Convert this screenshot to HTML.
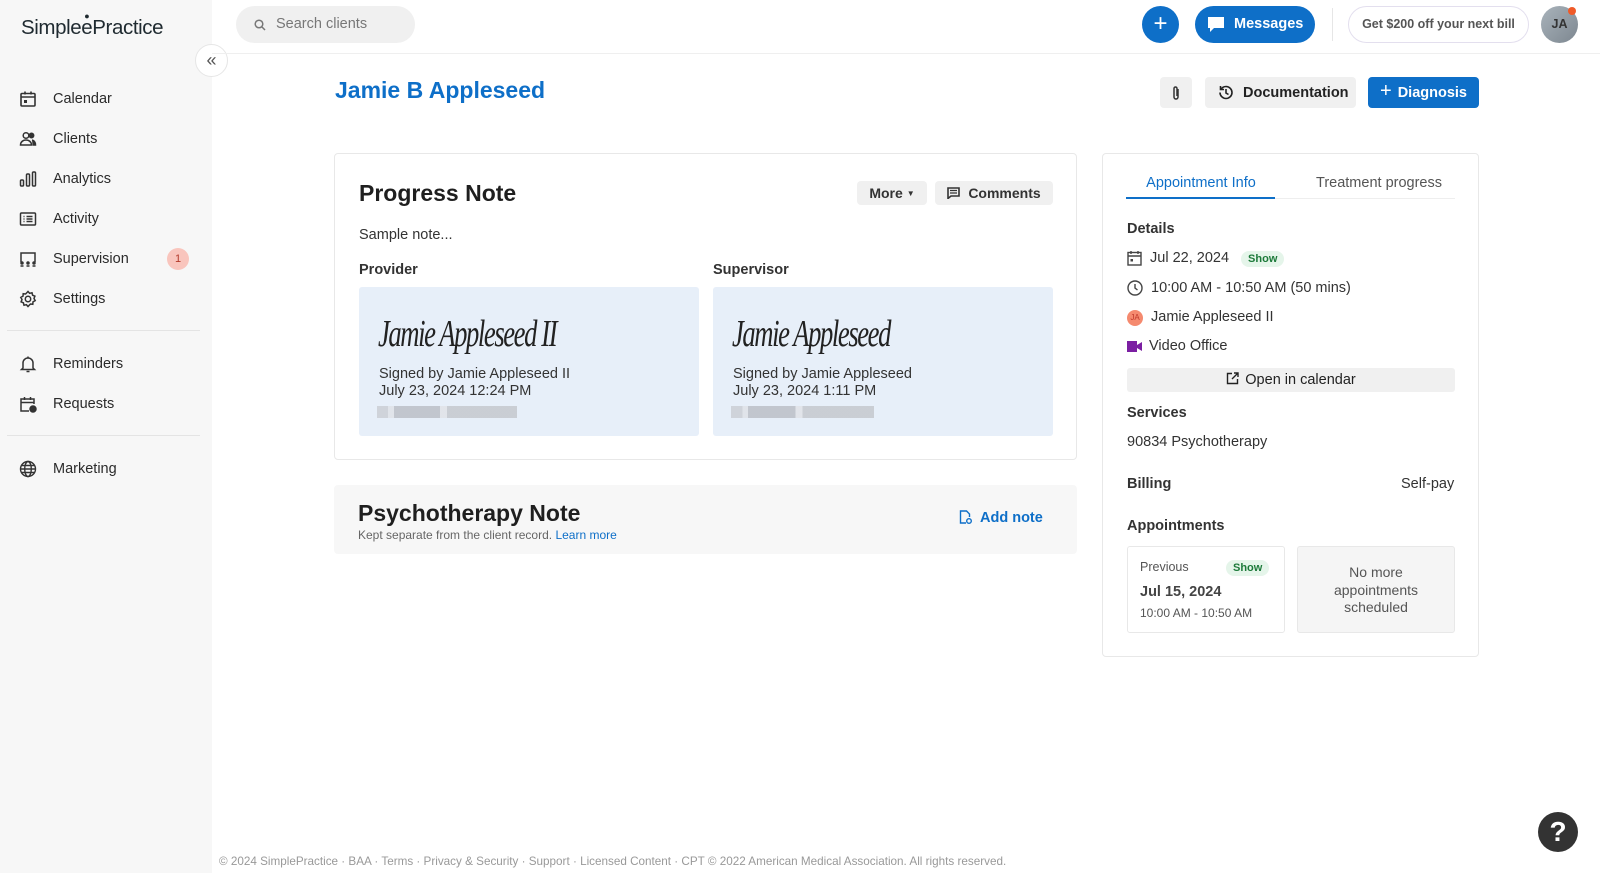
<!DOCTYPE html>
<html><head><meta charset="utf-8"><style>
*{box-sizing:border-box;margin:0;padding:0}
body{width:1600px;height:873px;overflow:hidden;background:#fff;font-family:"Liberation Sans",Arial,sans-serif;color:#222;position:relative}
.a{position:absolute}
.side{left:0;top:0;width:212px;height:873px;background:#f7f7f7}
.nav{position:absolute;left:0;width:212px;height:30px;display:flex;align-items:center;font-size:14.5px;color:#2b2b2b}
.nav svg{position:absolute;left:19px;width:18px;height:18px}
.nav span{position:absolute;left:53px}
.hr{position:absolute;left:7px;width:193px;height:1px;background:#e4e4e4}
.btn{position:absolute;display:flex;align-items:center;justify-content:center;border-radius:4px;font-size:14.5px;font-weight:bold}
.lbl{position:absolute;font-size:14.5px;font-weight:bold;color:#333}
.txt{position:absolute;font-size:14.5px;color:#333}
.pill{display:inline-block;background:#e5f5ea;color:#1d7a3a;font-size:11px;font-weight:bold;border-radius:10px;padding:2px 7px}
</style></head><body>
<div class="a side"></div>
<div class="a" style="left:21px;top:16px;font-size:20.5px;color:#1f2a30;letter-spacing:-0.4px">Simple<span style="position:relative">e<span style="position:absolute;left:3px;top:-5px;font-size:9px">&#9679;</span></span>Practice</div>

<div class="nav" style="top:84px"><svg viewBox="0 0 18 18" fill="none" stroke="#333" stroke-width="1.6"><rect x="2" y="3.5" width="14" height="12.5" rx="1"/><path d="M2 7h14M6 1.5v3M12 1.5v3"/><rect x="5" y="10" width="3" height="3" fill="#333" stroke="none"/></svg><span>Calendar</span></div>
<div class="nav" style="top:124px"><svg viewBox="0 0 18 18" fill="none" stroke="#333" stroke-width="1.5"><circle cx="7" cy="5.5" r="2.8"/><path d="M1.5 15c0-3 2.5-5 5.5-5s5.5 2 5.5 5z"/><circle cx="12.5" cy="5.5" r="2.2" fill="#333"/><path d="M13 10c2 .5 3.5 2 3.5 5h-3" fill="#333"/></svg><span>Clients</span></div>
<div class="nav" style="top:164px"><svg viewBox="0 0 18 18" fill="none" stroke="#333" stroke-width="1.5"><rect x="1.5" y="10" width="3" height="6" rx="1"/><rect x="7.5" y="4" width="3" height="12" rx="1"/><rect x="13.5" y="2" width="3" height="14" rx="1"/></svg><span>Analytics</span></div>
<div class="nav" style="top:204px"><svg viewBox="0 0 18 18" fill="none" stroke="#333" stroke-width="1.5"><rect x="1.5" y="3" width="15" height="12" rx="1"/><path d="M4.5 6.5h1M7.5 6.5h6M4.5 9h1M7.5 9h6M4.5 11.5h1M7.5 11.5h6"/></svg><span>Activity</span></div>
<div class="nav" style="top:244px"><svg viewBox="0 0 18 18" fill="none" stroke="#333" stroke-width="1.5"><path d="M2 12V3h14v9"/><path d="M1.5 16h3M7.5 16h3M13.5 16h3"/><circle cx="3" cy="13" r="1" fill="#333"/><circle cx="9" cy="13" r="1" fill="#333"/><circle cx="15" cy="13" r="1" fill="#333"/></svg><span>Supervision</span><div class="a" style="left:167px;top:4px;width:22px;height:22px;border-radius:11px;background:#f9c5bd;color:#b3392a;font-size:11px;text-align:center;line-height:22px">1</div></div>
<div class="nav" style="top:284px"><svg viewBox="0 0 18 18" fill="none" stroke="#333" stroke-width="1.5"><circle cx="9" cy="9" r="2.7"/><path d="M9 1.5l1.6 1.8 2.4-.5.6 2.4 2.3 1-.9 2.3 1.2 2.1-2.2 1.2-.2 2.5-2.4-.3L9 16.5l-1.6-1.8-2.4.5-.6-2.4-2.3-1 .9-2.3L1.8 7.4 4 6.2l.2-2.5 2.4.3z"/></svg><span>Settings</span></div>
<div class="hr" style="top:330px"></div>
<div class="nav" style="top:349px"><svg viewBox="0 0 18 18" fill="none" stroke="#333" stroke-width="1.5"><path d="M4 13V8a5 5 0 0110 0v5l1.5 1.5h-13z"/><path d="M7.5 16.5h3M9 1.5v1.5"/></svg><span>Reminders</span></div>
<div class="nav" style="top:389px"><svg viewBox="0 0 18 18" fill="none" stroke="#333" stroke-width="1.5"><path d="M10 16H2V4h13v5M2 7.5h13M5.5 2v3M11.5 2v3"/><circle cx="14" cy="14" r="3" fill="#333"/></svg><span>Requests</span></div>
<div class="hr" style="top:435px"></div>
<div class="nav" style="top:454px"><svg viewBox="0 0 18 18" fill="none" stroke="#333" stroke-width="1.4"><circle cx="9" cy="9" r="7.5"/><ellipse cx="9" cy="9" rx="3.3" ry="7.5"/><path d="M1.5 9h15M2.5 5.5h13M2.5 12.5h13"/></svg><span>Marketing</span></div>

<div class="a" style="left:195px;top:44px;width:33px;height:33px;border-radius:50%;background:#fff;border:1px solid #e6e6e6;text-align:center;line-height:30px;font-size:18px;color:#555">&laquo;</div>

<!-- topbar -->
<div class="a" style="left:212px;top:53px;width:1388px;height:1px;background:#efefef"></div>
<div class="a" style="left:236px;top:6px;width:179px;height:37px;border-radius:19px;background:#f0f0f0;font-size:14.5px;color:#777;line-height:37px;padding-left:40px">Search clients
<svg class="a" style="left:18px;top:13px" width="12" height="12" viewBox="0 0 12 12" fill="none" stroke="#777" stroke-width="1.5"><circle cx="5" cy="5" r="3.8"/><path d="M8 8l3 3"/></svg></div>
<div class="a" style="left:1142px;top:6px;width:37px;height:37px;border-radius:50%;background:#0e6fc8;color:#fff;font-size:24px;text-align:center;line-height:35px">+</div>
<div class="a" style="left:1195px;top:6px;width:120px;height:37px;border-radius:19px;background:#0e6fc8;color:#fff;font-size:14.5px;font-weight:bold;line-height:37px;padding-left:39px">Messages
<svg class="a" style="left:12px;top:10px" width="18" height="17" viewBox="0 0 18 17"><path d="M1 1h16v11H7l-4 4v-4H1z" fill="#fff"/></svg></div>
<div class="a" style="left:1332px;top:8px;width:1px;height:33px;background:#e6e6e6"></div>
<div class="a" style="left:1348px;top:6px;width:181px;height:37px;border-radius:19px;border:1px solid #e3dfee;font-size:12.5px;font-weight:bold;color:#555;text-align:center;line-height:35px">Get $200 off your next bill</div>
<div class="a" style="left:1541px;top:6px;width:37px;height:37px;border-radius:50%;background:linear-gradient(135deg,#a9b3bb,#7d8790);color:#333;font-size:12.5px;font-weight:bold;text-align:center;line-height:37px">JA</div>
<div class="a" style="left:1568px;top:7px;width:8px;height:8px;border-radius:50%;background:#f05a28"></div>

<!-- title row -->
<div class="a" style="left:335px;top:77px;font-size:23px;font-weight:bold;color:#0e6fc8">Jamie B Appleseed</div>
<div class="btn" style="left:1160px;top:77px;width:32px;height:31px;background:#f0f0f0"><svg width="10" height="16" viewBox="0 0 10 16" fill="none" stroke="#333" stroke-width="1.5"><path d="M7 4v8a2 2 0 01-4 0V3.5a1.5 1.5 0 013 0V11"/></svg></div>
<div class="btn" style="left:1205px;top:77px;width:151px;height:31px;background:#f0f0f0;color:#222;justify-content:flex-start;padding-left:12px"><svg width="17" height="17" viewBox="0 0 17 17" fill="none" stroke="#222" stroke-width="1.6" style="margin-right:9px"><path d="M3 8.5a6 6 0 106-6 6 6 0 00-5 2.7"/><path d="M3.5 2v3.5H7"/><path d="M9 5v4l2.5 1.5"/></svg>Documentation</div>
<div class="btn" style="left:1368px;top:77px;width:111px;height:31px;background:#0e6fc8;color:#fff"><span style="font-size:20px;font-weight:normal;margin-right:6px;margin-top:-2px">+</span>Diagnosis</div>

<!-- progress note -->
<div class="a" style="left:334px;top:153px;width:743px;height:307px;border:1px solid #e8e8e8;border-radius:4px"></div>
<div class="a" style="left:359px;top:180px;font-size:23px;font-weight:bold;color:#1f1f1f">Progress Note</div>
<div class="btn" style="left:857px;top:181px;width:70px;height:24px;background:#f0f0f0;color:#333;font-size:14px">More <span style="font-size:8px;margin-left:4px">&#9660;</span></div>
<div class="btn" style="left:935px;top:181px;width:118px;height:24px;background:#f0f0f0;color:#333;font-size:14px"><svg width="13" height="12" viewBox="0 0 13 12" style="margin-right:8px"><path d="M1 1h11v8H4l-3 2.5z" fill="none" stroke="#333" stroke-width="1.6"/><path d="M3 3.5h7M3 6h7" stroke="#333" stroke-width="1.2"/></svg>Comments</div>
<div class="txt" style="left:359px;top:227px">Sample note...</div>
<div class="lbl" style="left:359px;top:262px">Provider</div>
<div class="lbl" style="left:713px;top:262px">Supervisor</div>
<div class="a" style="left:359px;top:287px;width:340px;height:149px;background:#e7eff9;border-radius:3px"></div>
<div class="a" style="left:713px;top:287px;width:340px;height:149px;background:#e7eff9;border-radius:3px"></div>
<div class="a" style="left:378px;top:312px;font-family:'Liberation Serif',serif;font-style:italic;font-size:38px;color:#222;letter-spacing:-2px;transform:scaleX(0.7);transform-origin:left">Jamie Appleseed II</div>
<div class="a" style="left:732px;top:312px;font-family:'Liberation Serif',serif;font-style:italic;font-size:38px;color:#222;letter-spacing:-2px;transform:scaleX(0.7);transform-origin:left">Jamie Appleseed</div>
<div class="txt" style="left:379px;top:366px;line-height:17px">Signed by Jamie Appleseed II<br>July 23, 2024 12:24 PM</div>
<div class="txt" style="left:733px;top:366px;line-height:17px">Signed by Jamie Appleseed<br>July 23, 2024 1:11 PM</div>
<div class="a" style="left:377px;top:406px;width:140px;height:12px;background:linear-gradient(90deg,#c9ccd2 0 8%,#dfe1e6 8% 12%,#b8bcc3 12% 45%,#e0e2e6 45% 50%,#c2c5cb 50% 100%);opacity:.8"></div>
<div class="a" style="left:731px;top:406px;width:143px;height:12px;background:linear-gradient(90deg,#c9ccd2 0 8%,#dfe1e6 8% 12%,#b8bcc3 12% 45%,#e0e2e6 45% 50%,#c2c5cb 50% 100%);opacity:.8"></div>

<!-- psychotherapy -->
<div class="a" style="left:334px;top:485px;width:743px;height:69px;background:#f7f7f7;border-radius:4px"></div>
<div class="a" style="left:358px;top:500px;font-size:23px;font-weight:bold;color:#1f1f1f">Psychotherapy Note</div>
<div class="a" style="left:358px;top:528px;font-size:12px;color:#666">Kept separate from the client record. <span style="color:#0e6fc8">Learn more</span></div>
<div class="a" style="left:959px;top:510px;font-size:14.5px;font-weight:bold;color:#0e6fc8"><svg width="13" height="14" viewBox="0 0 13 14" fill="none" stroke="#0e6fc8" stroke-width="1.4" style="margin-right:8px;vertical-align:-2px"><path d="M7 13H1.5V1h6l3 3v3"/><circle cx="10" cy="11" r="2.3"/></svg>Add note</div>

<!-- right card -->
<div class="a" style="left:1102px;top:153px;width:377px;height:504px;border:1px solid #e8e8e8;border-radius:4px"></div>
<div class="a" style="left:1127px;top:175px;width:148px;text-align:center;font-size:14.5px;color:#0e6fc8">Appointment Info</div>
<div class="a" style="left:1126px;top:197px;width:149px;height:2px;background:#0e6fc8"></div>
<div class="a" style="left:1275px;top:198px;width:180px;height:1px;background:#eee"></div>
<div class="a" style="left:1300px;top:175px;width:180px;font-size:14.5px;color:#555;text-align:left;padding-left:16px">Treatment progress</div>
<div class="lbl" style="left:1127px;top:221px">Details</div>
<svg class="a" style="left:1127px;top:250px" width="15" height="16" viewBox="0 0 15 16" fill="none" stroke="#444" stroke-width="1.4"><rect x="1" y="2.5" width="13" height="12.5"/><path d="M1 6h13M4 1v3M11 1v3"/><rect x="3.5" y="9" width="2.5" height="2.5" fill="#444" stroke="none"/></svg>
<div class="txt" style="left:1150px;top:250px">Jul 22, 2024 <span class="pill" style="margin-left:8px">Show</span></div>
<svg class="a" style="left:1127px;top:280px" width="16" height="16" viewBox="0 0 16 16" fill="none" stroke="#444" stroke-width="1.4"><circle cx="8" cy="8" r="7"/><path d="M8 4v4l2.5 2"/></svg>
<div class="txt" style="left:1151px;top:280px">10:00 AM - 10:50 AM (50 mins)</div>
<div class="a" style="left:1127px;top:310px;width:16px;height:16px;border-radius:50%;background:#f58a6f;color:#c0392b;font-size:8px;text-align:center;line-height:16px">JA</div>
<div class="txt" style="left:1151px;top:309px">Jamie Appleseed II</div>
<svg class="a" style="left:1127px;top:341px" width="15" height="11" viewBox="0 0 15 11"><rect x="0" y="0" width="10" height="11" fill="#7b1fa2"/><path d="M10 4l5-3v9l-5-3z" fill="#7b1fa2"/></svg>
<div class="txt" style="left:1149px;top:338px">Video Office</div>
<div class="a" style="left:1127px;top:368px;width:328px;height:24px;background:#f0f0f0;border-radius:3px;text-align:center;line-height:24px;font-size:14.5px;color:#222"><svg width="13" height="13" viewBox="0 0 13 13" fill="none" stroke="#222" stroke-width="1.4" style="vertical-align:-1px;margin-right:6px"><path d="M6 1.5H1.5v10h10V7M8 1h4v4M12 1L6 7"/></svg>Open in calendar</div>
<div class="lbl" style="left:1127px;top:405px">Services</div>
<div class="txt" style="left:1127px;top:434px">90834 Psychotherapy</div>
<div class="lbl" style="left:1127px;top:476px">Billing</div>
<div class="txt" style="left:1401px;top:476px">Self-pay</div>
<div class="lbl" style="left:1127px;top:518px">Appointments</div>
<div class="a" style="left:1127px;top:546px;width:158px;height:87px;border:1px solid #e8e8e8;border-radius:3px"></div>
<div class="a" style="left:1140px;top:560px;font-size:12.5px;color:#555">Previous</div>
<div class="a" style="left:1226px;top:558px"><span class="pill">Show</span></div>
<div class="a" style="left:1140px;top:584px;font-size:14.5px;font-weight:bold;color:#444">Jul 15, 2024</div>
<div class="a" style="left:1140px;top:606px;font-size:12px;color:#555">10:00 AM - 10:50 AM</div>
<div class="a" style="left:1297px;top:546px;width:158px;height:87px;border:1px solid #e8e8e8;border-radius:3px;background:#f5f5f5;font-size:14px;color:#555;text-align:center;padding-top:17px;line-height:17.5px">No more<br>appointments<br>scheduled</div>

<!-- footer -->
<div class="a" style="left:219px;top:855px;font-size:11.7px;color:#999">© 2024 SimplePractice · BAA · Terms · Privacy &amp; Security · Support · Licensed Content · CPT © 2022 American Medical Association. All rights reserved.</div>
<div class="a" style="left:1538px;top:812px;width:40px;height:40px;border-radius:50%;background:#333;color:#fff;font-size:28px;font-weight:bold;text-align:center;line-height:40px">?</div>
</body></html>
